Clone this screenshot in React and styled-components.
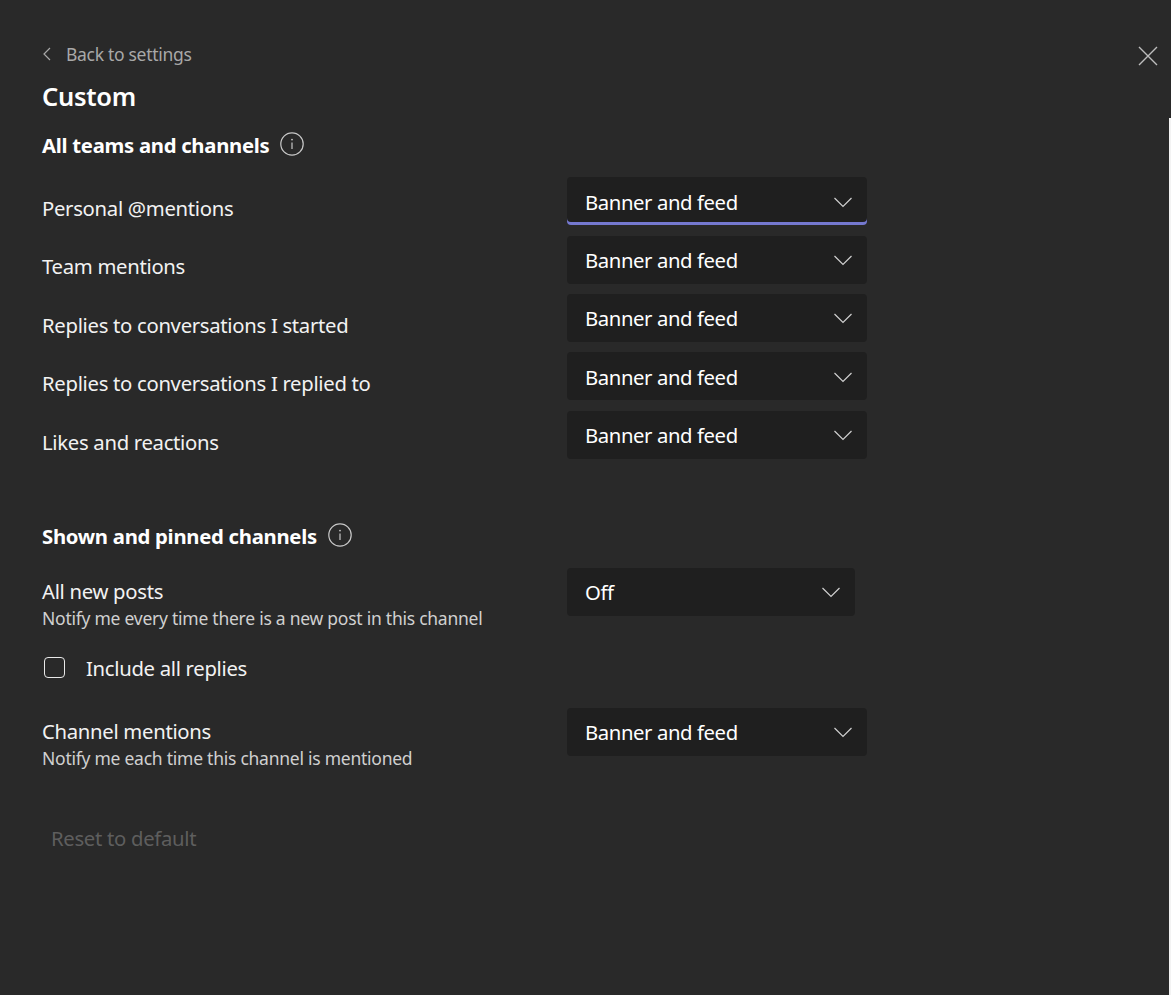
import React from "react";
import styled, { createGlobalStyle } from "styled-components";

const GlobalStyle = createGlobalStyle`
  html, body {
    margin: 0;
    padding: 0;
    background: #292929;
  }
  * {
    box-sizing: border-box;
  }
`;

const teamRows = [
  "Personal @mentions",
  "Team mentions",
  "Replies to conversations I started",
  "Replies to conversations I replied to",
  "Likes and reactions",
];

const Chevron = () => (
  <svg width="20" height="12" viewBox="0 0 20 12" fill="none">
    <path d="M1.5 2L10 10.5L18.5 2" stroke="#d0d0d0" strokeWidth="1.2" />
  </svg>
);

const InfoIcon = () => (
  <InfoWrap>
    <svg width="24" height="24" viewBox="0 0 24 24" fill="none">
      <circle cx="12" cy="12" r="11.2" stroke="#c8c8c8" strokeWidth="1.2" />
      <circle cx="12" cy="7.6" r="0.9" fill="#c8c8c8" />
      <path d="M12 10.5V17" stroke="#c8c8c8" strokeWidth="1.2" />
    </svg>
  </InfoWrap>
);

const Dropdown = ({ value, focused, narrow }) => (
  <Select $focused={focused} $narrow={narrow}>
    <span>{value}</span>
    <Chevron />
  </Select>
);

export default function App() {
  return (
    <Page>
      <GlobalStyle />
      <CloseButton>
        <svg width="20" height="20" viewBox="0 0 20 20" fill="none">
          <path d="M1 1L19 19M19 1L1 19" stroke="#bdbdbd" strokeWidth="1.4" />
        </svg>
      </CloseButton>
      <EdgeStrip />
      <BackLink>
        <svg width="10" height="14" viewBox="0 0 10 14" fill="none">
          <path d="M8 1L2 7L8 13" stroke="#a8a8a8" strokeWidth="1.2" />
        </svg>
        <span>Back to settings</span>
      </BackLink>
      <Title>Custom</Title>
      <SectionHead>
        <SectionText>All teams and channels</SectionText>
        <InfoIcon />
      </SectionHead>
      <RowList>
        {teamRows.map((label, i) => (
          <Row key={label}>
            <LabelStack>
              <Label>{label}</Label>
            </LabelStack>
            <Dropdown value="Banner and feed" focused={i === 0} />
          </Row>
        ))}
      </RowList>
      <SectionHead $second>
        <SectionText>Shown and pinned channels</SectionText>
        <InfoIcon />
      </SectionHead>
      <DetailRow>
        <LabelStack $tight>
          <Label>All new posts</Label>
          <Hint>Notify me every time there is a new post in this channel</Hint>
        </LabelStack>
        <Dropdown value="Off" narrow />
      </DetailRow>
      <CheckRow>
        <CheckBox />
        <Label>Include all replies</Label>
      </CheckRow>
      <DetailRow>
        <LabelStack $tight>
          <Label>Channel mentions</Label>
          <Hint>Notify me each time this channel is mentioned</Hint>
        </LabelStack>
        <Dropdown value="Banner and feed" />
      </DetailRow>
      <ResetButton>Reset to default</ResetButton>
    </Page>
  );
}

const Page = styled.div`
  position: relative;
  width: 1171px;
  height: 995px;
  overflow: hidden;
  padding: 42px 0 0 42px;
  background: #292929;
  color: #fff;
  font-family: "Noto Sans", "Open Sans", sans-serif;
`;

const CloseButton = styled.div`
  position: absolute;
  top: 46px;
  left: 1138px;
  display: flex;
`;

const EdgeStrip = styled.div`
  position: absolute;
  top: 118px;
  right: 0;
  bottom: 0;
  width: 2px;
  background: #f3f3f3;
`;

const BackLink = styled.div`
  display: flex;
  align-items: center;
  gap: 14px;
  height: 24px;
  color: #a8a8a8;
  font-size: 17.5px;
  letter-spacing: -0.3px;
`;

const Title = styled.h1`
  margin: 12px 0 0;
  font-size: 25.5px;
  line-height: 36px;
  font-weight: 600;
  letter-spacing: -0.3px;
`;

const SectionHead = styled.div`
  display: flex;
  align-items: center;
  gap: 11px;
  height: 28px;
  margin-top: ${(p) => (p.$second ? "63.2px" : "17px")};
`;

const SectionText = styled.h2`
  margin: 0;
  font-size: 20.3px;
  font-weight: 700;
  letter-spacing: -0.28px;
`;

const InfoWrap = styled.span`
  display: flex;
  margin-bottom: 2px;
`;

const RowList = styled.div`
  display: flex;
  flex-direction: column;
  gap: 10.4px;
  margin-top: 18.2px;
`;

const Row = styled.div`
  display: grid;
  grid-template-columns: 525px auto;
  align-items: start;
  justify-content: start;
`;

const DetailRow = styled(Row)`
  margin-top: 18px;
  & + & {
    margin-top: 26px;
  }
`;

const LabelStack = styled.div`
  padding-top: ${(p) => (p.$tight ? "9px" : "16.8px")};
`;

const Label = styled.div`
  font-size: 20.3px;
  line-height: 28px;
  letter-spacing: -0.3px;
  color: #f2f2f2;
`;

const Hint = styled.div`
  margin-top: 1px;
  font-size: 17.5px;
  line-height: 24px;
  letter-spacing: -0.25px;
  color: #d0d0d0;
`;

const Select = styled.div`
  display: flex;
  align-items: center;
  justify-content: space-between;
  width: ${(p) => (p.$narrow ? "288px" : "300px")};
  height: 48px;
  padding: 1px 14px 0 18px;
  border-radius: 4px;
  background: #1f1f1f;
  box-shadow: ${(p) => (p.$focused ? "inset 0 -3px 0 #7579d0" : "none")};
  font-size: 20.3px;
  letter-spacing: -0.4px;
  color: #fff;
`;

const CheckRow = styled.div`
  display: flex;
  align-items: center;
  gap: 21px;
  height: 28px;
  margin: 24px 0 26px 2px;
`;

const CheckBox = styled.div`
  width: 21px;
  height: 21px;
  border: 1.5px solid #e8e8e8;
  border-radius: 4px;
`;

const ResetButton = styled.div`
  margin: 54px 0 0 9px;
  font-size: 20.3px;
  line-height: 28px;
  letter-spacing: -0.3px;
  color: #5e5e5e;
`;
